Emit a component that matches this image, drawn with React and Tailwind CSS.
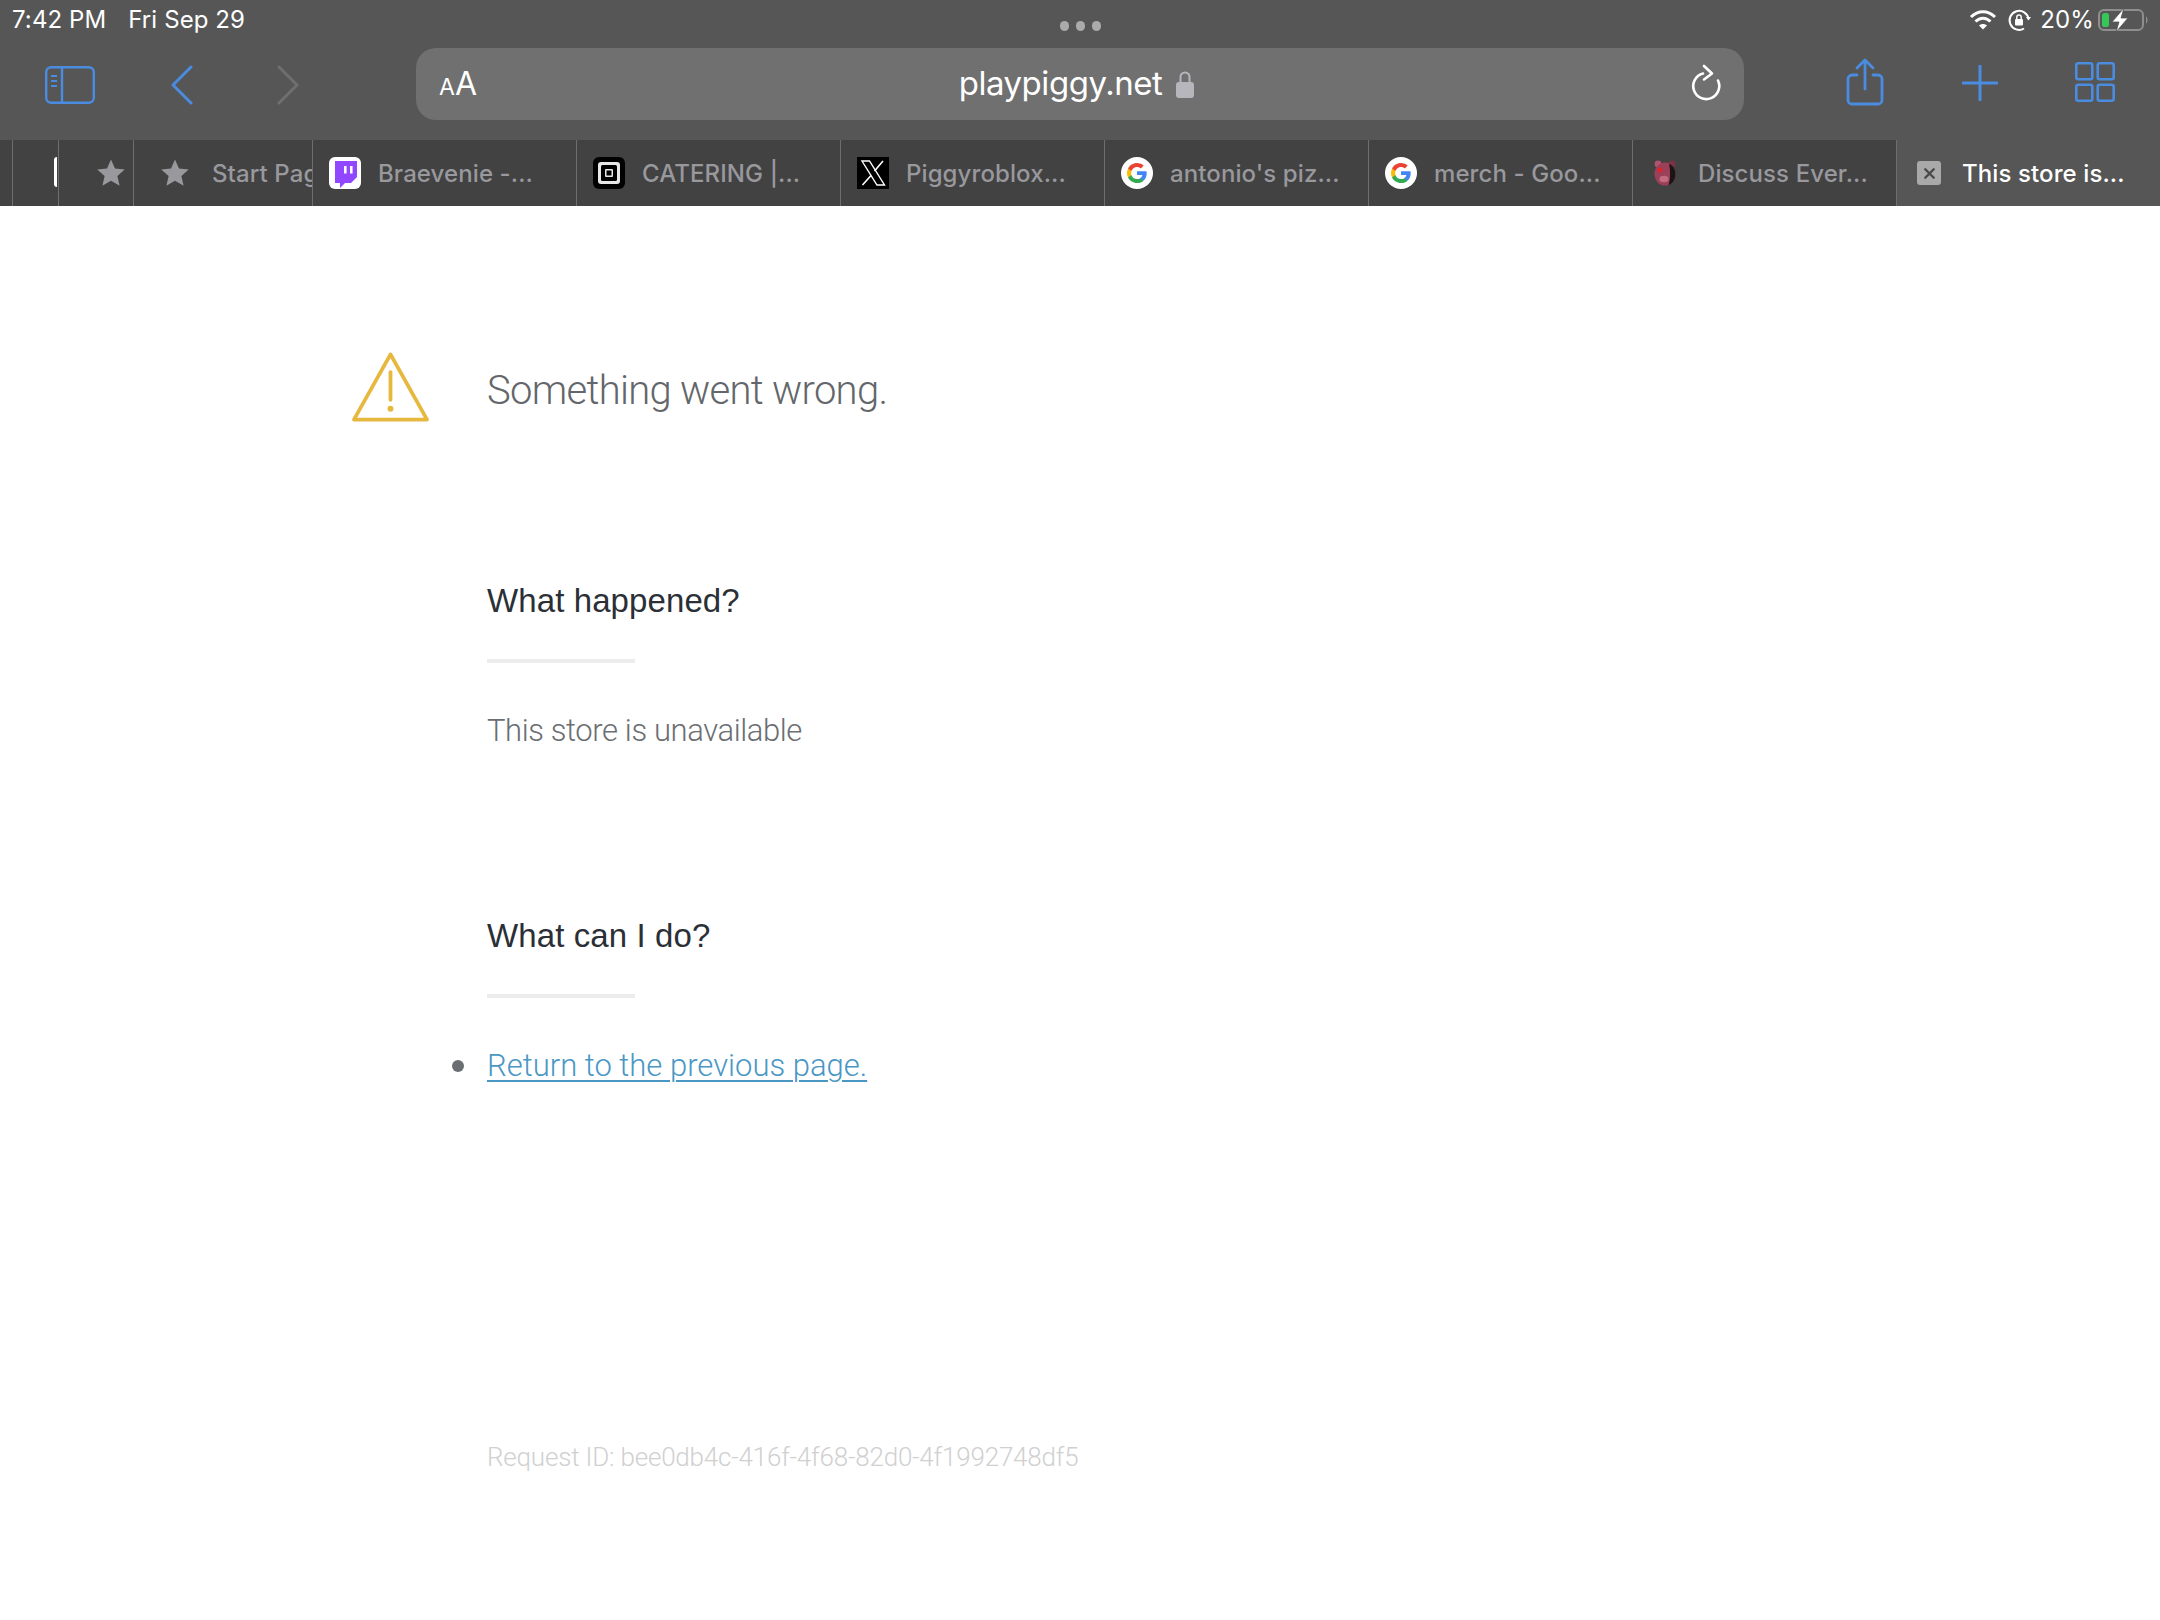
const blue = "#4a8ce0";

const StarIcon = () => (
  <svg viewBox="0 0 24 24" className="w-[30px] h-[30px] shrink-0" fill="#98989d">
    <path d="M12 1.2l3.2 7.2 7.8.8-5.9 5.2 1.8 7.7L12 18.1l-6.9 4 1.8-7.7L1 9.2l7.8-.8z" />
  </svg>
);

const TwitchIcon = () => (
  <svg viewBox="0 0 32 32" className="w-[32px] h-[32px] shrink-0">
    <rect width="32" height="32" rx="6" fill="#fff" />
    <path d="M6 4h22v16l-6 6h-6l-5 5v-5H6z" fill="#9146ff" />
    <path d="M10 7.5h15v11l-4.5 4.5H15l-3.5 3.5V23H10z" fill="#9146ff" stroke="#fff" strokeWidth="0" />
    <rect x="15" y="9" width="2.6" height="7.5" fill="#fff" />
    <rect x="21" y="9" width="2.6" height="7.5" fill="#fff" />
  </svg>
);

const SquareIcon = () => (
  <svg viewBox="0 0 32 32" className="w-[32px] h-[32px] shrink-0">
    <rect width="32" height="32" rx="6" fill="#000" />
    <rect x="5" y="5" width="22" height="22" rx="3" fill="#e8e8e8" />
    <rect x="8" y="8" width="16" height="16" rx="1.500" fill="#000" />
    <rect x="12" y="12" width="8" height="8" rx="1" fill="#e8e8e8" />
    <rect x="13.500" y="13.500" width="5" height="5" fill="#000" />
  </svg>
);

const XIcon = () => (
  <svg viewBox="0 0 32 32" className="w-[32px] h-[32px] shrink-0">
    <rect width="32" height="32" fill="#000" />
    <path d="M5 4h7.5l15 24H20z" fill="none" stroke="#fff" strokeWidth="1.4" />
    <path d="M26 4L17.5 14M14 18.5L5.5 28" stroke="#fff" strokeWidth="1.6" />
  </svg>
);

const GoogleIcon = () => (
  <svg viewBox="0 0 32 32" className="w-[32px] h-[32px] shrink-0">
    <circle cx="16" cy="16" r="16" fill="#fff" />
    <g transform="translate(5 5) scale(0.4583)">
      <path fill="#4285f4" d="M45.1 24.5c0-1.6-.1-3.1-.4-4.5H24v8.5h11.8c-.5 2.7-2.1 5-4.4 6.6v5.5h7.1c4.2-3.8 6.6-9.5 6.6-16.1z" />
      <path fill="#34a853" d="M24 46c5.9 0 10.9-2 14.5-5.3l-7.1-5.5c-2 1.3-4.5 2.1-7.4 2.1-5.7 0-10.5-3.8-12.2-9H4.5v5.7C8.1 41.1 15.5 46 24 46z" />
      <path fill="#fbbc05" d="M11.8 28.3c-.4-1.3-.7-2.8-.7-4.3s.3-3 .7-4.3V14H4.5C3 17 2.2 20.4 2.2 24s.8 7 2.3 10l7.3-5.7z" />
      <path fill="#ea4335" d="M24 10.7c3.2 0 6.1 1.1 8.4 3.3l6.3-6.3C34.9 4.1 29.9 2 24 2 15.5 2 8.1 6.9 4.5 14l7.3 5.7c1.7-5.2 6.5-9 12.2-9z" />
    </g>
  </svg>
);

const PigIcon = () => (
  <svg viewBox="0 0 32 32" className="w-[32px] h-[32px] shrink-0">
    <circle cx="9" cy="7" r="3.4" fill="#b0566c" />
    <circle cx="23" cy="7" r="3.4" fill="#7a3245" />
    <ellipse cx="16" cy="17" rx="10.5" ry="11.5" fill="#9b4058" />
    <path d="M20 7c4 1 6.5 5 6.5 10s-3 10-7 11c2-5 2-15 .5-21z" fill="#1c1416" />
    <circle cx="11" cy="13" r="2.4" fill="#e0222c" />
    <ellipse cx="15" cy="22" rx="4.6" ry="3.2" fill="#c26a80" />
  </svg>
);

const ClosedIcon = () => (
  <div className="w-[24px] h-[24px] shrink-0 rounded-[3px] bg-[#a9a9a9] flex items-center justify-center">
    <svg viewBox="0 0 24 24" className="w-[17px] h-[17px]" stroke="#4a4a4a" strokeWidth="3.4" strokeLinecap="round">
      <path d="M6 6l12 12M18 6L6 18" />
    </svg>
  </div>
);

const tabs = [
  { title: "Braevenie -...", icon: <TwitchIcon /> },
  { title: "CATERING |...", icon: <SquareIcon /> },
  { title: "Piggyroblox...", icon: <XIcon /> },
  { title: "antonio's piz...", icon: <GoogleIcon /> },
  { title: "merch - Goo...", icon: <GoogleIcon /> },
  { title: "Discuss Ever...", icon: <PigIcon /> },
];

const Tab = ({ title, icon }) => (
  <div className="w-[264px] h-full flex items-center gap-[17px] pl-[16px] border-r border-[#6e6e6e] overflow-hidden whitespace-nowrap text-[#98989d]">
    {icon}
    <span className="mt-[2px]">{title}</span>
  </div>
);

const StatusBar = () => (
  <div className="h-[48px] pb-[8px] pl-[12px] pr-[6px] flex items-center text-white text-[24px] tracking-[0.1px]">
    <div className="flex-1 flex gap-[22px]">
      <span>7:42 PM</span>
      <span>Fri Sep 29</span>
    </div>
    <div className="flex gap-[7px] mt-[12px] mr-[6px]">
      <span className="w-[9px] h-[10px] rounded-full bg-[#ababab]" />
      <span className="w-[9px] h-[10px] rounded-full bg-[#ababab]" />
      <span className="w-[9px] h-[10px] rounded-full bg-[#ababab]" />
    </div>
    <div className="flex-1 flex items-center justify-end">
      <svg viewBox="0 0 28 24" className="w-[28px] h-[24px]" fill="none" stroke="#fff" strokeWidth="3" strokeLinecap="butt">
        <path d="M2 9c7-7 17-7 24 0" />
        <path d="M6.5 13.5c4.500-4.500 10.500-4.500 15 0" />
        <path d="M14 21.500l-4-4c2.200-2 5.800-2 8 0z" fill="#fff" stroke="none" />
      </svg>
      <svg viewBox="0 0 24 24" className="w-[24px] h-[24px] ml-[10px]" fill="none" stroke="#fff" strokeWidth="2">
        <path d="M21.500 11A9.500 9.500 0 1 0 17 20.500" />
        <path d="M19 9l2.500 3.500L24 9z" fill="#fff" stroke="none" />
        <rect x="8" y="11" width="8" height="6.500" rx="1" fill="#fff" stroke="none" />
        <path d="M9.800 11V9.200a2.200 2.200 0 0 1 4.400 0V11" strokeWidth="1.500" />
      </svg>
      <span className="ml-[9px]">20%</span>
      <svg viewBox="0 0 56 24" className="w-[56px] h-[24px] ml-[4px]">
        <rect x="1" y="2" width="44" height="20" rx="5" fill="none" stroke="#8e8e8e" strokeWidth="2" />
        <rect x="4" y="5" width="7" height="14" rx="2.500" fill="#35c759" />
        <path d="M26 0L14 14h7l-3 10 12-14h-7z" fill="#fff" stroke="#565656" strokeWidth="0.8" />
        <path d="M48 8.500c2 .5 2 6.500 0 7z" fill="#8e8e8e" />
      </svg>
    </div>
  </div>
);

const Toolbar = () => (
  <div className="h-[92px] flex items-start text-white">
    <div className="w-[416px] pt-[17px] pl-[45px] flex items-center">
      <svg viewBox="0 0 50 38" className="w-[50px] h-[38px]" fill="none" stroke={blue} strokeWidth="2.400">
        <rect x="1.200" y="1.200" width="47.600" height="35.600" rx="5" />
        <path d="M17 1.200v35.600" />
        <path d="M6 10h6M6 15h6M6 20h6" strokeWidth="2" />
      </svg>
      <svg viewBox="0 0 24 40" className="w-[24px] h-[40px] ml-[75px]" fill="none" stroke={blue} strokeWidth="3" strokeLinecap="round" strokeLinejoin="round">
        <path d="M21 2L3 20l18 18" />
      </svg>
      <svg viewBox="0 0 24 40" className="w-[24px] h-[40px] ml-[82px]" fill="none" stroke="#6f6f6f" strokeWidth="3" strokeLinecap="round" strokeLinejoin="round">
        <path d="M3 2l18 18L3 38" />
      </svg>
    </div>
    <div className="w-[1328px] h-[72px] rounded-[20px] bg-[#707070] flex items-center pl-[23px] pr-[22px]">
      <span className="flex-1 whitespace-nowrap"><span className="text-[23px]">A</span><span className="text-[32px]">A</span></span>
      <span className="flex items-center gap-[14px] mr-[8px] text-[33px] tracking-[-0.45px]">
        playpiggy.net
        <svg viewBox="0 0 18 28" className="w-[18px] h-[28px]" fill="#b6b6bc">
          <path d="M4.500 13V7a4.500 4.500 0 0 1 9 0v6" fill="none" stroke="#b6b6bc" strokeWidth="2" />
          <rect y="12" width="18" height="16" rx="3" />
        </svg>
      </span>
      <span className="flex-1 flex justify-end">
        <svg viewBox="0 0 32 40" className="w-[32px] h-[40px]" fill="none" stroke="#fff" strokeWidth="2.600" strokeLinecap="round" strokeLinejoin="round">
          <path d="M13 9.500a13 13 0 1 0 15 7" />
          <path d="M14 2l8 7.500-8 6" />
        </svg>
      </span>
    </div>
    <div className="flex-1 flex items-center pl-[102px] pt-[10px]">
      <svg viewBox="0 0 38 48" className="w-[38px] h-[48px]" fill="none" stroke={blue} strokeWidth="2.800" strokeLinecap="round" strokeLinejoin="round">
        <path d="M11 17H6a4 4 0 0 0-4 4v21a4 4 0 0 0 4 4h26a4 4 0 0 0 4-4V21a4 4 0 0 0-4-4h-5" />
        <path d="M19 31V3M11 10l8-8 8 8" />
      </svg>
      <svg viewBox="0 0 36 36" className="w-[36px] h-[36px] ml-[78px] mt-[2px]" fill="none" stroke={blue} strokeWidth="3" strokeLinecap="round">
        <path d="M18 1v34M1 18h34" />
      </svg>
      <svg viewBox="0 0 40 40" className="w-[40px] h-[40px] ml-[77px]" fill="none" stroke={blue} strokeWidth="2.600">
        <rect x="1.300" y="1.300" width="16" height="16" rx="2" />
        <rect x="22.700" y="1.300" width="16" height="16" rx="2" />
        <rect x="1.300" y="22.700" width="16" height="16" rx="2" />
        <rect x="22.700" y="22.700" width="16" height="16" rx="2" />
      </svg>
    </div>
  </div>
);

const TabBar = () => (
  <div className="h-[66px] bg-[#424242] flex items-center text-[24px] font-medium tracking-[0.1px]">
    <div className="w-[13px] h-full border-r border-[#6e6e6e]" />
    <div className="w-[46px] h-full border-r border-[#6e6e6e] flex items-center justify-end pr-[1px]">
      <span className="w-[3px] h-[30px] bg-white rounded-l-[3px] mb-[2px]" />
    </div>
    <div className="w-[75px] h-full border-r border-[#6e6e6e] flex items-center pl-[37px]">
      <StarIcon />
    </div>
    <div className="w-[179px] h-full border-r border-[#6e6e6e] flex items-center gap-[22px] pl-[26px] overflow-hidden whitespace-nowrap text-[#98989d]">
      <StarIcon />
      <span className="mt-[2px]">Start Page</span>
    </div>
    {tabs.map((t) => (
      <Tab key={t.title} title={t.title} icon={t.icon} />
    ))}
    <div className="flex-1 h-full bg-[#565656] flex items-center gap-[21px] pl-[20px] whitespace-nowrap text-white">
      <ClosedIcon />
      <span className="mt-[2px]">This store is...</span>
    </div>
  </div>
);

const SectionTitle = ({ children }) => (
  <div>
    <h2 className="text-[33px] leading-[40px] text-[#2b2f36] tracking-[0.1px] font-['Liberation_Sans',sans-serif]">{children}</h2>
    <div className="w-[148px] h-[4px] bg-[#ececec] mt-[38px]" />
  </div>
);

export default function App() {
  return (
    <div className="w-[2160px] h-[1620px] bg-white font-['Inter',sans-serif] overflow-hidden">
      <div className="bg-[#565656]">
        <StatusBar />
        <Toolbar />
        <TabBar />
      </div>
      <main className="pl-[351px] pt-[145px] font-['Roboto',sans-serif]">
        <div className="flex items-center gap-[57px]">
          <svg viewBox="0 0 80 72" className="w-[79px] h-[72px]" fill="none" stroke="#e6b83e" strokeWidth="3.800" strokeLinecap="round" strokeLinejoin="round">
            <path d="M40 3L3 69h74z" />
            <path d="M40 21v28" />
            <circle cx="40" cy="58" r="3" fill="#e6b83e" stroke="none" />
          </svg>
          <h1 className="text-[40px] leading-[48px] mt-[8px] font-light text-[#63666a] tracking-[-0.7px]">Something went wrong.</h1>
        </div>
        <div className="pl-[136px]">
          <section className="mt-[158px]">
            <SectionTitle>What happened?</SectionTitle>
            <p className="mt-[48px] text-[31px] leading-[40px] font-light text-[#6b6e72] tracking-[-0.4px]">This store is unavailable</p>
          </section>
          <section className="mt-[165px]">
            <SectionTitle>What can I do?</SectionTitle>
            <ul className="mt-[48px] text-[31px] leading-[40px] font-light">
              <li className="flex items-center gap-[23px] -ml-[35px]">
                <span className="w-[12px] h-[12px] rounded-full bg-[#6b6e72]" />
                <a href="#" className="text-[#4a97c4] underline underline-offset-[4px] decoration-2">Return to the previous page.</a>
              </li>
            </ul>
          </section>
          <p className="mt-[355px] text-[26px] leading-[32px] font-light text-[#d0d0d0] tracking-[-0.2px]">Request ID: bee0db4c-416f-4f68-82d0-4f1992748df5</p>
        </div>
      </main>
    </div>
  );
}
